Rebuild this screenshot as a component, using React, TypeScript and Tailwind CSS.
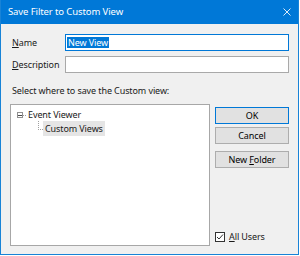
import React from "react";

const font = { fontFamily: '"Noto Sans", "Open Sans", sans-serif' };

function U({ children }: { children: React.ReactNode }) {
  return <span className="underline underline-offset-[1px]">{children}</span>;
}

function Btn({ children, primary }: { children: React.ReactNode; primary?: boolean }) {
  return (
    <div
      className={
        "h-[17px] w-full flex items-center justify-center bg-[#e1e1e1] text-[9px] tracking-[-0.1px] text-black border " +
        (primary ? "border-[#0078d7]" : "border-[#adadad]")
      }
    >
      {children}
    </div>
  );
}

export default function App() {
  return (
    <div className="w-[300px] h-[256px] bg-white" style={font}>
      <div className="w-[299px] h-[255px] flex flex-col bg-[#f0f0f0] border-l border-r border-b border-[#1883d7]">
        <div className="h-[24px] bg-[#0078d7] flex items-center justify-between pl-[7px] pr-[6px] shrink-0">
          <span className="text-white text-[9.5px] tracking-[-0.1px] leading-none">Save Filter to Custom View</span>
          <svg width="8" height="8" viewBox="0 0 8 8" className="mr-[1px]">
            <path d="M0.5 0.5 L7.5 7.5 M7.5 0.5 L0.5 7.5" stroke="#dbeaf8" strokeWidth="1" />
          </svg>
        </div>
        <div className="flex-1 flex flex-col pl-[9px] pr-[9px] pt-[10px] pb-[8px] text-[9px] tracking-[-0.1px] text-[#1a1a1a]">
          <div className="flex items-center h-[17px]">
            <div className="w-[55px] pl-[2px]">
              <U>N</U>ame
            </div>
            <div className="flex-1 h-[17px] bg-white border border-[#0078d7] flex items-center pl-[1px]">
              <span className="bg-[#0078d7] text-white leading-[11px] px-[1px]">New View</span>
            </div>
          </div>
          <div className="flex items-center h-[17px] mt-[5px]">
            <div className="w-[55px] pl-[2px]">
              <U>D</U>escription
            </div>
            <div className="flex-1 h-[17px] bg-white border border-[#a9a9a9]" />
          </div>
          <div className="mt-[12px] pl-[2px] leading-[12px]">Select where to save the Custom view:</div>
          <div className="flex flex-1 mt-[7px] gap-[5px]">
            <div className="w-[200px] bg-white border border-[#a7a7a7]">
              <div className="flex items-center mt-[4px] ml-[6px] h-[12px]">
                <div className="w-[6px] h-[6px] border border-[#919191] flex items-center justify-center">
                  <div className="w-[4px] h-px bg-[#4a4a4a]" />
                </div>
                <div className="w-[3px] border-t border-dotted border-[#a0a0a0]" />
                <span className="ml-[2px]">Event Viewer</span>
              </div>
              <div className="flex items-center ml-[27px] h-[15px]">
                <div className="w-[5px] h-[9px] self-start border-l border-b border-dotted border-[#a0a0a0]" />
                <span className="ml-0 bg-[#e5e5e5] px-[2px] leading-[15px]">Custom Views</span>
              </div>
            </div>
            <div className="flex-1 flex flex-col pt-[3px]">
              <Btn primary>OK</Btn>
              <div className="mt-[3px]">
                <Btn>Cancel</Btn>
              </div>
              <div className="mt-[7px]">
                <Btn>
                  New&nbsp;<U>F</U>older
                </Btn>
              </div>
              <div className="flex-1" />
              <div className="flex items-center mb-[3px] h-[12px]">
                <div className="w-[10px] h-[10px] bg-white border border-[#333] flex items-center justify-center">
                  <svg width="8" height="8" viewBox="0 0 8 8">
                    <path d="M1 4 L3 6 L7 1.5" stroke="#333" strokeWidth="1" fill="none" />
                  </svg>
                </div>
                <span className="ml-[4px]">
                  <U>A</U>ll Users
                </span>
              </div>
            </div>
          </div>
        </div>
      </div>
    </div>
  );
}
